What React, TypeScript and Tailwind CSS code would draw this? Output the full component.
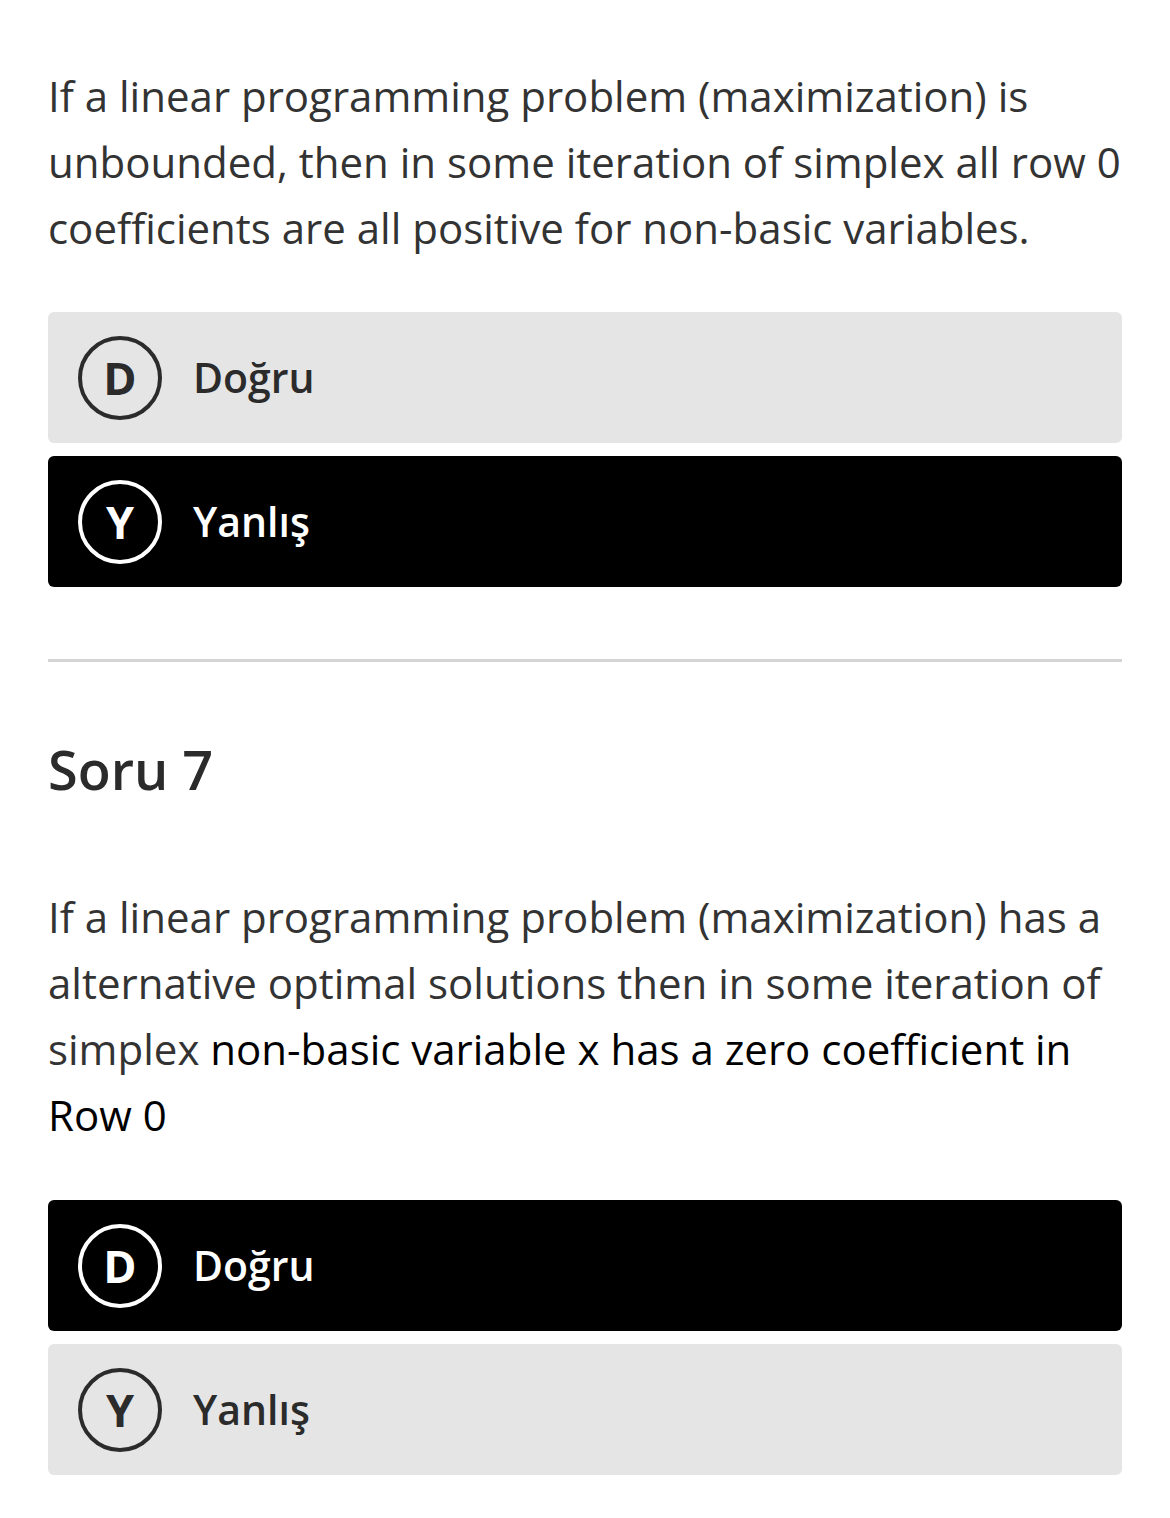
import React from "react";

type Opt = { letter: string; label: string; selected?: boolean };

function Option({ letter, label, selected }: Opt) {
  return (
    <div
      className={
        "flex h-[131px] items-center rounded-[6px] px-[30px] " +
        (selected ? "bg-black text-white" : "bg-[#e5e5e5] text-[#2b2b2b]")
      }
    >
      <div
        className={
          "flex h-[84px] w-[84px] items-center justify-center rounded-full border-[4px] text-[45px] font-bold leading-none " +
          (selected ? "border-white" : "border-[#2b2b2b]")
        }
      >
        {letter}
      </div>
      <span className="ml-[31px] text-[41px] font-semibold">{label}</span>
    </div>
  );
}

export default function App() {
  return (
    <div
      className="min-h-[1518px] bg-white px-[48px] pt-[63px] text-[#333]"
      style={{ fontFamily: '"Open Sans", "Noto Sans", sans-serif' }}
    >
      <p className="text-[42px] leading-[66px]">
        If a linear programming problem (maximization) is unbounded, then in
        some iteration of simplex all row 0 coefficients are all positive for
        non-basic variables.
      </p>

      <div className="mt-[51px] flex flex-col gap-[13px]">
        <Option letter="D" label="Doğru" />
        <Option letter="Y" label="Yanlış" selected />
      </div>

      <hr className="mt-[72px] border-t-[3px] border-[#d4d4d4]" />

      <h2 className="mt-[80px] text-[54px] font-semibold leading-none text-[#2b2b2b]">
        Soru 7
      </h2>

      <p className="mt-[88px] text-[42px] leading-[66px]">
        If a linear programming problem (maximization) has a alternative
        optimal solutions then in some iteration of simplex{" "}
        <span className="text-black">
          non-basic variable x has a zero coefficient in Row 0
        </span>
      </p>

      <div className="mt-[52px] flex flex-col gap-[13px]">
        <Option letter="D" label="Doğru" selected />
        <Option letter="Y" label="Yanlış" />
      </div>
    </div>
  );
}
